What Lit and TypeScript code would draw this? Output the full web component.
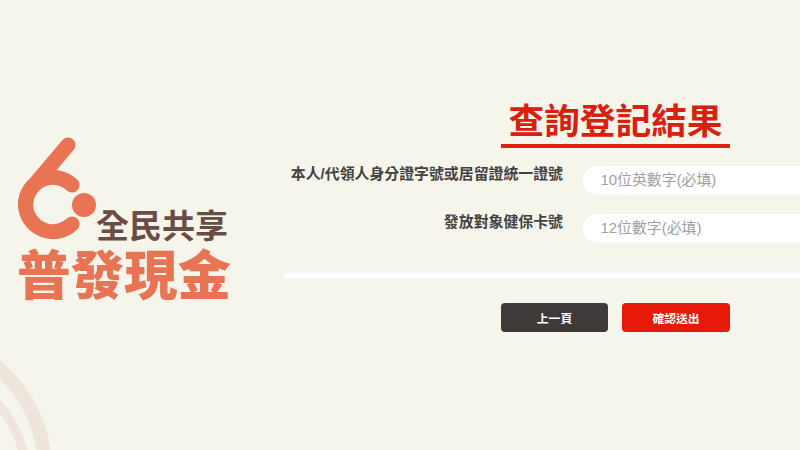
import { LitElement, html, css } from "lit";
import { customElement } from "lit/decorators.js";

@customElement("app-root")
export class AppRoot extends LitElement {
  static styles = css`
    :host {
      display: block;
      width: 100%;
      height: 100vh;
      overflow: hidden;
      position: relative;
      background: #f6f5ec;
      font-family: "Liberation Sans", "Noto Sans CJK TC", sans-serif;
    }
    .arcs { position: absolute; left: 0; bottom: 0; width: 80px; height: 110px; }
    .page { display: flex; height: 450px; position: relative; }
    .brand { width: 284px; flex: none; box-sizing: border-box; padding: 135px 0 0 17px; font-family: "Noto Sans CJK TC", sans-serif; }
    .brand-top { display: flex; align-items: flex-end; height: 106px; padding-left: 1px; }
    .mark { width: 78px; height: 106px; flex: none; display: block; }
    .slogan { font-size: 33px; line-height: 34px; font-weight: 700; color: #6b4d46; white-space: nowrap; }
    .headline { font-size: 53.5px; line-height: 54px; font-weight: 900; color: #e97454; white-space: nowrap; margin-top: 4px; }
    .main { flex: 1; padding-top: 97px; min-width: 0; }
    h1 {
      margin: 0 0 0 217px; width: 229px; box-sizing: border-box;
      height: 51px; border-bottom: 4px solid #e01f10;
      font-size: 35.7px; line-height: 44px; font-weight: 700; color: #d9200f;
      text-align: center; white-space: nowrap;
      font-family: "Noto Sans CJK TC", sans-serif;
    }
    .fields { display: flex; flex-direction: column; gap: 19px; margin-top: 18px; }
    .row { display: grid; grid-template-columns: 279px 1fr; column-gap: 19.5px; }
    label { font-size: 14.9px; line-height: 16px; font-weight: 700; color: #444240; text-align: right; white-space: nowrap; }
    input {
      height: 29px; box-sizing: border-box; width: 100%; border: 0; outline: 0;
      background: #fff; border-radius: 15px 0 0 15px; padding: 0 0 2px 18px;
      font-size: 14.9px; color: #333; font-family: "Liberation Sans", "Noto Sans CJK TC", sans-serif;
    }
    input::placeholder { color: #a0a0a0; opacity: 1; }
    .divider { height: 5px; background: #fff; margin-top: 30px; }
    .actions { display: flex; gap: 14px; margin: 24.500px 0 0 217px; }
    button {
      height: 29px; border: 0; border-radius: 4px; padding: 0;
      color: #fff; font-size: 11.8px; font-weight: 700;
      font-family: "Noto Sans CJK TC", sans-serif;
    }
    .back { width: 107px; background: #3e3a39; }
    .submit { width: 108px; background: #e7190b; }
  `;

  render() {
    return html`
      <svg class="arcs" viewBox="0 340 80 110" fill="none" aria-hidden="true">
        <circle cx="-90" cy="470" r="135" stroke="#efe5dd" stroke-width="14"></circle>
        <circle cx="-90" cy="480" r="116.500" stroke="#efe5dd" stroke-width="9"></circle>
      </svg>
      <div class="page">
        <section class="brand">
          <div class="brand-top">
            <svg class="mark" viewBox="18 135 78 106" fill="none" aria-hidden="true">
              <path d="M68 145 L30 190 Q25.500 197 25.500 205 A27.500 27.500 0 0 0 72 224" stroke="#e97454" stroke-width="15" stroke-linecap="round"></path>
              <path d="M25.500 205 A27.500 27.500 0 0 1 72 185" stroke="#e97454" stroke-width="15" stroke-linecap="round"></path>
              <circle cx="84" cy="205" r="12" fill="#e97454"></circle>
            </svg>
            <div class="slogan">全民共享</div>
          </div>
          <div class="headline">普發現金</div>
        </section>
        <section class="main">
          <h1>查詢登記結果</h1>
          <div class="fields">
            <div class="row">
              <label for="id">本人/代領人身分證字號或居留證統一證號</label>
              <input id="id" placeholder="10位英數字(必填)" />
            </div>
            <div class="row">
              <label for="card">發放對象健保卡號</label>
              <input id="card" placeholder="12位數字(必填)" />
            </div>
          </div>
          <div class="divider"></div>
          <div class="actions">
            <button class="back">上一頁</button>
            <button class="submit">確認送出</button>
          </div>
        </section>
      </div>
    `;
  }
}
